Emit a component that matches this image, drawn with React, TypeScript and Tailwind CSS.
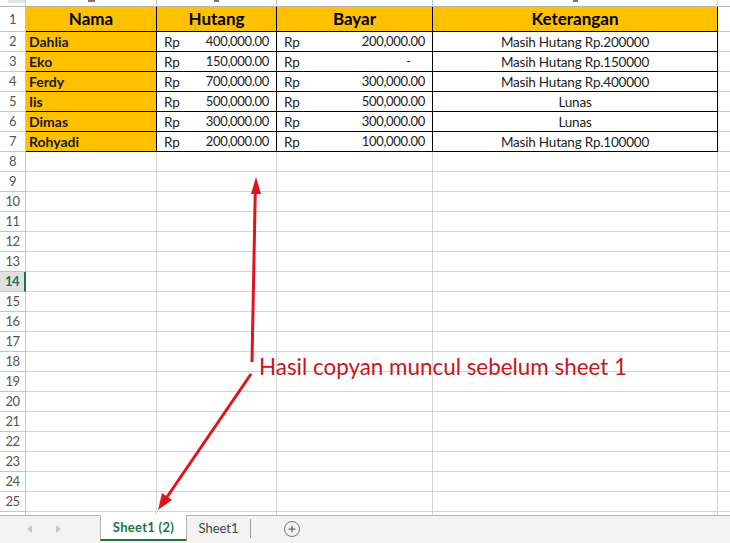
import { Plus } from "lucide-react";

const data = [
  ["Dahlia", "400,000.00", "200,000.00", "Masih Hutang Rp.200000"],
  ["Eko", "150,000.00", "-", "Masih Hutang Rp.150000"],
  ["Ferdy", "700,000.00", "300,000.00", "Masih Hutang Rp.400000"],
  ["Iis", "500,000.00", "500,000.00", "Lunas"],
  ["Dimas", "300,000.00", "300,000.00", "Lunas"],
  ["Rohyadi", "200,000.00", "100,000.00", "Masih Hutang Rp.100000"],
];

const emptyRows = Array.from({ length: 18 }, (_, i) => i + 8);

function RowHead({ n, active }: { n: number; active?: boolean }) {
  return (
    <div
      className={
        active
          ? "flex w-[26px] shrink-0 items-center justify-center border-r-2 border-b border-r-[#217346] border-b-[#c6c6c6] bg-[#e1e1e1] pt-px text-[13px] font-bold tracking-[-0.5px] text-[#217346]"
          : "flex w-[26px] shrink-0 items-center justify-center border-r border-b border-[#c6c6c6] bg-white pt-px text-[13px] tracking-[-0.5px] text-[#555]"
      }
    >
      {n}
    </div>
  );
}

function Money({ value, wide }: { value: string; wide?: boolean }) {
  return (
    <div className={`flex shrink-0 items-center justify-between border-r border-b border-black px-[7px] pt-px ${wide ? "w-[156px]" : "w-[120px]"}`}>
      <span className="text-[13.5px]">Rp</span>
      <span className={value === "-" ? "pr-[14px] text-[13px]" : "text-[13px] tracking-[-0.3px]"}>{value}</span>
    </div>
  );
}

export default function App() {
  return (
    <div className="relative flex h-[543px] w-[730px] flex-col overflow-hidden bg-white font-['Lato','Liberation_Sans',sans-serif] text-[14px] text-[#222]">
      {/* row above the table, scrolled away, only specks of it show */}
      <div className="flex h-[7px] shrink-0 border-b border-[#b5b5b5]">
        <div className="w-[26px] border-r border-[#c6c6c6] pl-2">
          <div className="h-[3px] bg-[#e4e4e4]" />
        </div>
        <div className="flex w-[131px] justify-center border-r border-[#c6c6c6]"><div className="h-[2px] w-[7px] bg-[#777]" /></div>
        <div className="flex w-[120px] justify-center border-r border-[#c6c6c6]"><div className="h-[2px] w-[5px] bg-[#777]" /></div>
        <div className="w-[156px] border-r border-[#c6c6c6]" />
        <div className="flex w-[285px] justify-center border-r border-[#c6c6c6]"><div className="h-[2px] w-[5px] bg-[#777]" /></div>
      </div>

      {/* header row */}
      <div className="flex h-[25px] shrink-0">
        <RowHead n={1} />
        <div className="flex w-[131px] items-center justify-center border-r border-b border-black bg-[#ffc000] text-[17px] font-bold text-black">Nama</div>
        <div className="flex w-[120px] items-center justify-center border-r border-b border-black bg-[#ffc000] text-[17px] font-bold text-black">Hutang</div>
        <div className="flex w-[156px] items-center justify-center border-r border-b border-black bg-[#ffc000] text-[17px] font-bold text-black">Bayar</div>
        <div className="flex w-[285px] items-center justify-center border-r border-b border-black bg-[#ffc000] text-[17px] font-bold text-black">Keterangan</div>
        <div className="flex-1 border-b border-[#c6c6c6]" />
      </div>

      {/* data rows */}
      {data.map((row, i) => (
        <div key={row[0]} className="flex h-5 shrink-0">
          <RowHead n={i + 2} />
          <div className="flex w-[131px] shrink-0 items-center border-r border-b border-black bg-[#ffc000] pl-[3px] font-bold text-[#1a1a1a]">{row[0]}</div>
          <Money value={row[1]} />
          <Money value={row[2]} wide />
          <div className="flex w-[285px] shrink-0 items-center justify-center border-r border-b border-black pt-px text-[13.5px] tracking-[-0.2px]">{row[3]}</div>
          <div className="flex-1 border-b border-[#c6c6c6]" />
        </div>
      ))}

      {/* empty rows */}
      {emptyRows.map((n) => (
        <div key={n} className="flex h-5 shrink-0">
          <RowHead n={n} active={n === 14} />
          <div className="w-[131px] shrink-0 border-r border-b border-[#d4d4d4]" />
          <div className="w-[120px] shrink-0 border-r border-b border-[#d4d4d4]" />
          <div className="w-[156px] shrink-0 border-r border-b border-[#d4d4d4]" />
          <div className="w-[285px] shrink-0 border-r border-b border-[#d4d4d4]" />
          <div className="flex-1 border-b border-[#d4d4d4]" />
        </div>
      ))}

      {/* bit of the next row before the tab bar */}
      <div className="flex h-[3px] shrink-0">
        <div className="w-[26px] border-r border-[#d4d4d4]" />
        <div className="w-[131px] border-r border-[#d4d4d4]" />
        <div className="w-[120px] border-r border-[#d4d4d4]" />
        <div className="w-[156px] border-r border-[#d4d4d4]" />
        <div className="w-[285px] border-r border-[#d4d4d4]" />
      </div>

      {/* sheet tabs */}
      <div className="flex flex-1 items-stretch border-t border-[#b5b5b5] bg-[#f3f3f3] pb-[2px]">
        <div className="flex w-[100px] items-center gap-[24px] pl-[27px]">
          <svg width="5" height="8" viewBox="0 0 5 8"><path d="M5 0 V8 L0 4 Z" fill="#c8c8c8" /></svg>
          <svg width="5" height="8" viewBox="0 0 5 8"><path d="M0 0 V8 L5 4 Z" fill="#c8c8c8" /></svg>
        </div>
        <div className="-mt-px flex w-[87px] items-center justify-center border-x border-b-2 border-x-[#b5b5b5] border-b-[#217346] bg-white pt-[2px] text-[13px] font-bold tracking-[0.3px] text-[#217346]">
          Sheet1 (2)
        </div>
        <div className="flex w-[63px] items-center justify-center text-[13px] text-[#444]">
          Sheet1
        </div>
        <div className="my-[3px] w-px bg-[#9a9a9a]" />
        <div className="ml-[33px] flex items-center">
          <div className="flex h-4 w-4 items-center justify-center rounded-full border-[1.5px] border-[#777] text-[#666]">
            <Plus size={10} strokeWidth={3} />
          </div>
        </div>
      </div>

      {/* annotation */}
      <span className="absolute top-[353px] left-[259px] text-[22.4px] leading-7 whitespace-nowrap text-[#c8161d]">
        Hasil copyan muncul sebelum sheet 1
      </span>
      <svg className="absolute top-0 left-0" width="730" height="543" fill="none">
        <path d="M252 362 L255.3 190" stroke="#e0141c" strokeWidth="3" />
        <path d="M256 177 L261 194 L251 194 Z" fill="#e0141c" />
        <path d="M251 374 L167 497" stroke="#e0141c" strokeWidth="3" />
        <path d="M158 510 L162 493 L172 500 Z" fill="#e0141c" />
      </svg>
    </div>
  );
}
